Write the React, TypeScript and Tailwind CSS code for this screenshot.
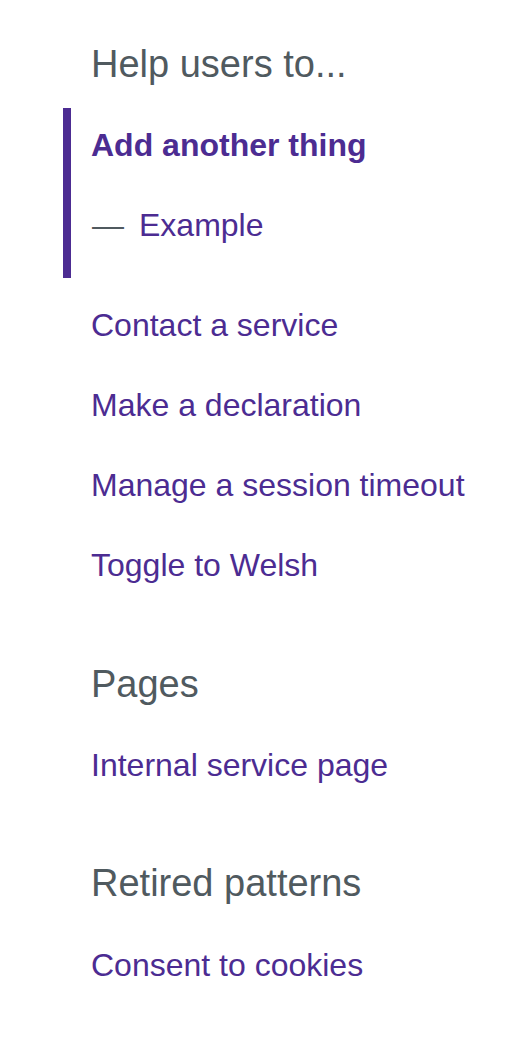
const linkClass = "block px-[20px] py-5 leading-[40px] text-[32px] text-[#4c2c92]";

export default function App() {
    return (
        <div className="min-h-[1054px] bg-white pl-[63px] font-['Liberation_Sans',Arial,sans-serif]">
            <h2 className="pt-[40px] pl-[28px] text-[38px] leading-[48px] text-[#505a5f]">
                Help users to...
            </h2>
            <div className="mt-[20px] border-l-8 border-[#4c2c92] pt-[17px] pb-[13px]">
                <a className="block pl-[20px] pb-5 leading-[40px] text-[32px] font-bold text-[#4c2c92]">
                    Add another thing
                </a>
                <a className={linkClass}>
                    <span className="ml-[1px] mr-[15px] text-[#505a5f]">—</span>Example
                </a>
            </div>
            <ul className="mt-[7px] pl-[8px]">
                <li><a className={linkClass}>Contact a service</a></li>
                <li><a className={linkClass}>Make a declaration</a></li>
                <li><a className={linkClass}>Manage a session timeout</a></li>
                <li><a className={linkClass}>Toggle to Welsh</a></li>
            </ul>
            <h2 className="mt-[55px] pl-[28px] text-[38px] leading-[48px] text-[#505a5f]">Pages</h2>
            <ul className="mt-[17px] pl-[8px]">
                <li><a className={linkClass}>Internal service page</a></li>
            </ul>
            <h2 className="mt-[54px] pl-[28px] text-[38px] leading-[48px] text-[#505a5f]">Retired patterns</h2>
            <ul className="mt-[18px] pl-[8px]">
                <li><a className={linkClass}>Consent to cookies</a></li>
            </ul>
        </div>
    );
}
